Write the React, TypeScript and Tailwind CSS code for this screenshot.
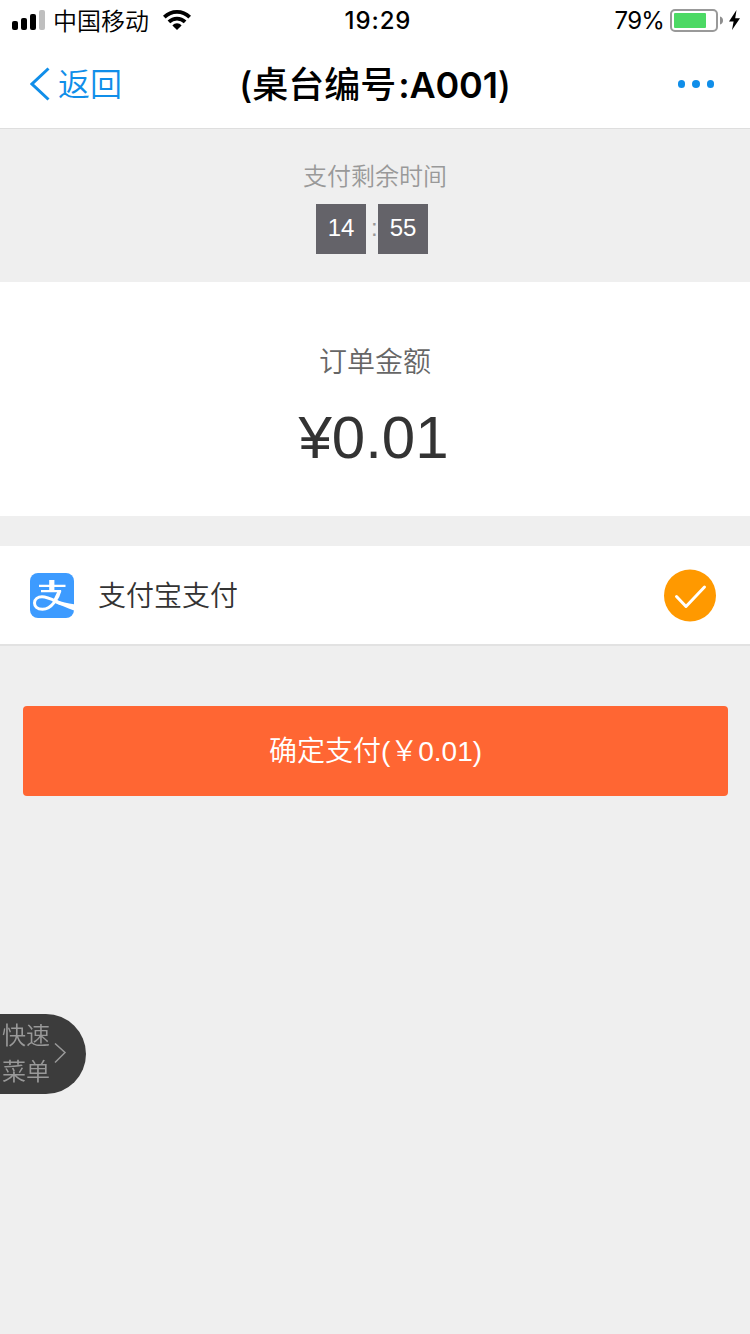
import React from "react";

const SignalIcon: React.FC = () => (
    <svg width="34" height="20" viewBox="0 0 34 20">
        <rect x="0" y="11" width="6" height="9" rx="2" fill="#000" />
        <rect x="9" y="8" width="6" height="12" rx="2" fill="#000" />
        <rect x="18" y="4" width="6" height="16" rx="2" fill="#000" />
        <rect x="27" y="0" width="6" height="20" rx="2" fill="#bfbfbf" />
    </svg>
)

const WifiIcon: React.FC = () => (
    <svg width="28" height="20" viewBox="0 0 28 20" fill="none" stroke="#000" strokeWidth="3.8">
        <path d="M1.3 7.2C8.5 0.2 19.5 0.2 26.7 7.2" />
        <path d="M5.9 11.9C10.5 7.5 17.5 7.5 22.1 11.9" />
        <path d="M9.4 15.6C12 12.6 16 12.6 18.600 15.6L14 20Z" fill="#000" stroke="none" />
    </svg>
)

const AlipayIcon: React.FC = () => (
    <svg width="44" height="45" viewBox="0 0 44 45" fill="none">
        <rect width="44" height="45" rx="8" fill="#3d9bff" />
        <path d="M19.2 7h5.2v10.500h-5.2z" fill="#fff" />
        <path d="M9 12.900h26.500M11 18.200h20" stroke="#fff" strokeWidth="2.2" />
        <path d="M30 17.500C28.500 24 22 36.300 12.500 36.300C7 36.300 4.500 33.500 4.500 30C4.500 26 8 23.800 12 23.800C18 23.800 24 27.500 32 31" stroke="#fff" strokeWidth="3" />
        <path d="M30.800 17.300C29.600 21 28 24 26 26.700C31 28.800 38 30.300 44 31.200V37.500C37 34.800 29.500 32 22.500 28.700L28 17.300Z" fill="#fff" />
    </svg>
)

const StatusBar: React.FC = () => (
    <div className="grid h-10 grid-cols-3 items-center pl-3 pr-2 text-2xl leading-9 text-black">
        <div className="flex items-center">
            <SignalIcon />
            <span className="ml-[7px] pt-[3px] font-[350]">中国移动</span>
            <span className="ml-3.5"><WifiIcon /></span>
        </div>
        <div className="pt-0.5 pl-0.5 text-center font-medium tracking-[0.9px]">19:29</div>
        <div className="flex items-center justify-end">
            <span className="pt-0.5 tracking-[-0.8px]">79%</span>
            <svg className="ml-1.5" width="72" height="24" viewBox="0 0 72 24">
                <rect x="1" y="2" width="46" height="21" rx="4" fill="#fff" stroke="#999" strokeWidth="2" />
                <rect x="4" y="5" width="32" height="15" rx="1" fill="#4cd964" />
                <path d="M50 8.500C52 9 53 10.500 53 12.500S52 16 50 16.500Z" fill="#8e8e8e" />
                <path d="M66.500 2L59 13.500h4.600L62 22L70 10.200h-4.800Z" fill="#000" />
            </svg>
        </div>
    </div>
)

const Header: React.FC = () => (
    <header className="bg-white font-[Inter,'Noto_Sans_CJK_SC',sans-serif]">
        <StatusBar />
        <nav className="grid h-[89px] grid-cols-[200px_1fr_200px] items-center border-b border-[#dedede]">
            <button className="flex items-center pl-[30px] text-[32px] leading-none text-[#108ee9]">
                <svg className="mr-2" width="20" height="34" viewBox="0 0 20 34" fill="none" stroke="#108ee9" strokeWidth="3">
                    <path d="M18.500 1.500L2 17L18.500 32.500" />
                </svg>
                <span className="pt-0.5 font-[350]">返回</span>
            </button>
            <h1 className="pt-0.5 text-center text-4xl font-semibold text-black"><span className="font-medium">(桌台编号</span><span className="ml-0.5 tracking-[-0.2px]">:A001</span><span className="font-medium">)</span></h1>
            <div className="flex justify-end gap-[7px] pr-9">
                <i className="size-[7.5px] rounded-full bg-[#108ee9]" />
                <i className="size-[7.5px] rounded-full bg-[#108ee9]" />
                <i className="size-[7.5px] rounded-full bg-[#108ee9]" />
            </div>
        </nav>
    </header>
)

const TimeBox: React.FC<{ value: string }> = ({ value }) => (
    <span className="block size-[50px] bg-[#646369] text-center leading-[48px] text-white">{value}</span>
)

const Countdown: React.FC = () => (
    <section className="flex h-[153px] flex-col items-center pt-[29px] text-2xl text-[#999]">
        <p className="h-[46px] pt-px leading-9 font-[350]">支付剩余时间</p>
        <div className="mr-[6px] flex">
            <TimeBox value="14" />
            <span className="w-3 pl-[5px] leading-[48px]">:</span>
            <TimeBox value="55" />
        </div>
    </section>
)

const QuickMenu: React.FC = () => (
    <button className="fixed left-0 top-[1014px] flex h-20 w-[86px] items-center rounded-r-full bg-[#3c3c3c] pl-0.5 text-2xl text-[#999]">
        <span className="w-12 leading-9 font-[350]">快速菜单</span>
        <svg className="ml-1" width="13" height="22" viewBox="0 0 13 22" fill="none" stroke="#999" strokeWidth="1.500">
            <path d="M1 0.500L11 9.500L1 19.500" />
        </svg>
    </button>
)

const App: React.FC = () => {
    const amount = "0.01"

    return (
        <div className="min-h-screen bg-[#efefef] font-['Liberation_Sans','Noto_Sans_CJK_SC',sans-serif]">
            <Header />
            <main>
                <Countdown />
                <section className="h-[234px] bg-white pt-[61px] text-center">
                    <p className="text-[28px] leading-10 font-[350] text-[#666]">订单金额</p>
                    <p className="mt-[17px] -ml-[3px] text-6xl leading-[76px] text-[#333]">¥{amount}</p>
                </section>
                <section className="mt-[30px] flex h-[100px] items-center border-b-2 border-[#e2e2e2] bg-white pl-[30px] pr-[34px]">
                    <AlipayIcon />
                    <span className="ml-6 pt-1 text-[28px] font-[350] text-[#333]">支付宝支付</span>
                    <svg className="ml-auto" width="52" height="53" viewBox="0 0 52 53" fill="none">
                        <circle cx="26" cy="26.500" r="26" fill="#ff9900" />
                        <path d="M12.500 27.500L22 37.500L40.500 18" stroke="#fff" strokeWidth="3" strokeLinecap="round" strokeLinejoin="round" />
                    </svg>
                </section>
                <div className="pt-[60px] pr-[22px] pl-[23px]">
                    <button className="h-[90px] w-full rounded bg-[#ff6633] pt-px text-[28px] font-[350] text-white">
                        确定支付(￥{amount})
                    </button>
                </div>
            </main>
            <QuickMenu />
        </div>
    )
}

export default App;
